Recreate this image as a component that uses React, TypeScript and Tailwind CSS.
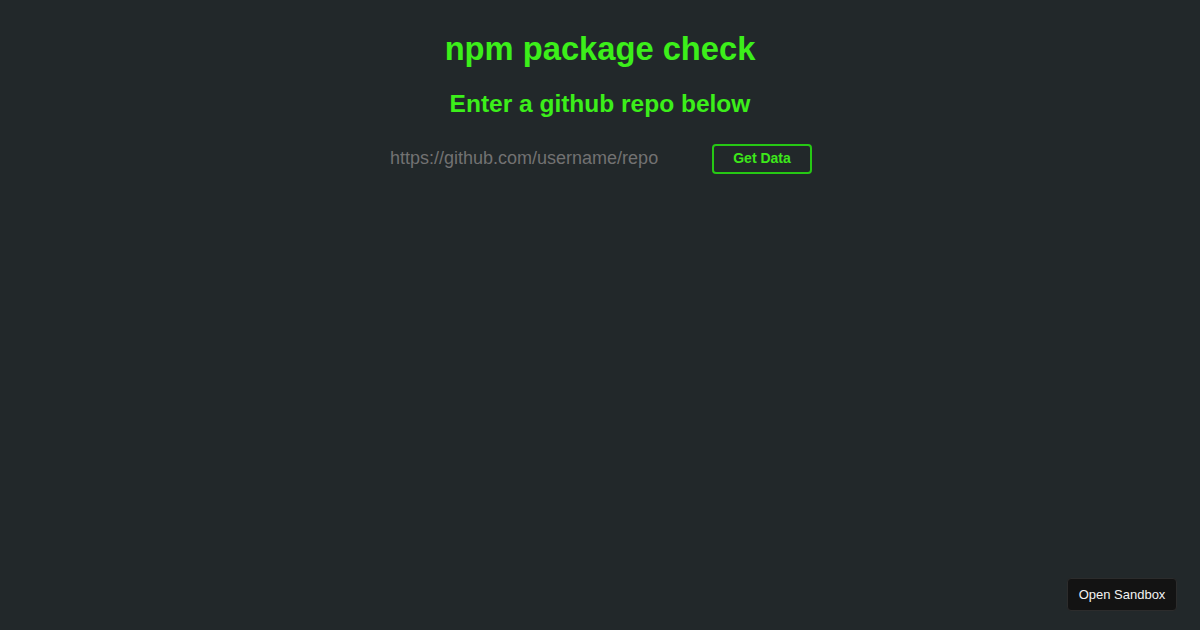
import { useState } from "react";

export default function App() {
  const [repo, setRepo] = useState("");

  return (
    <div className="min-h-screen bg-[#22282a] font-['Liberation_Sans',Arial,sans-serif] text-[#3cef1a]">
      <div className="flex flex-col items-center pt-[30px]">
        <h1 className="text-[32.7px] font-bold leading-[37px]">npm package check</h1>
        <h2 className="mt-[23px] text-[24.5px] font-bold leading-[28px]">Enter a github repo below</h2>

        <div className="mt-[23px] flex items-center gap-[12px]">
          <input
            value={repo}
            onChange={(e) => setRepo(e.target.value)}
            placeholder="https://github.com/username/repo"
            className="w-[312px] bg-transparent px-[2px] py-[4px] text-[18px] text-[#cfcfcf] placeholder:text-[#727272] outline-none"
          />
          <button className="h-[30px] w-[100px] rounded-[4px] border-2 border-[#26c814] text-[14px] font-bold text-[#3de81a]">
            Get Data
          </button>
        </div>
      </div>

      {/* sandbox link */}
      <button className="fixed bottom-[19px] right-[23px] h-[33px] w-[110px] rounded-[4px] border border-[#2c2c2c] bg-[#131313] text-[13px] text-[#f2f2f2]">
        Open Sandbox
      </button>
    </div>
  );
}
